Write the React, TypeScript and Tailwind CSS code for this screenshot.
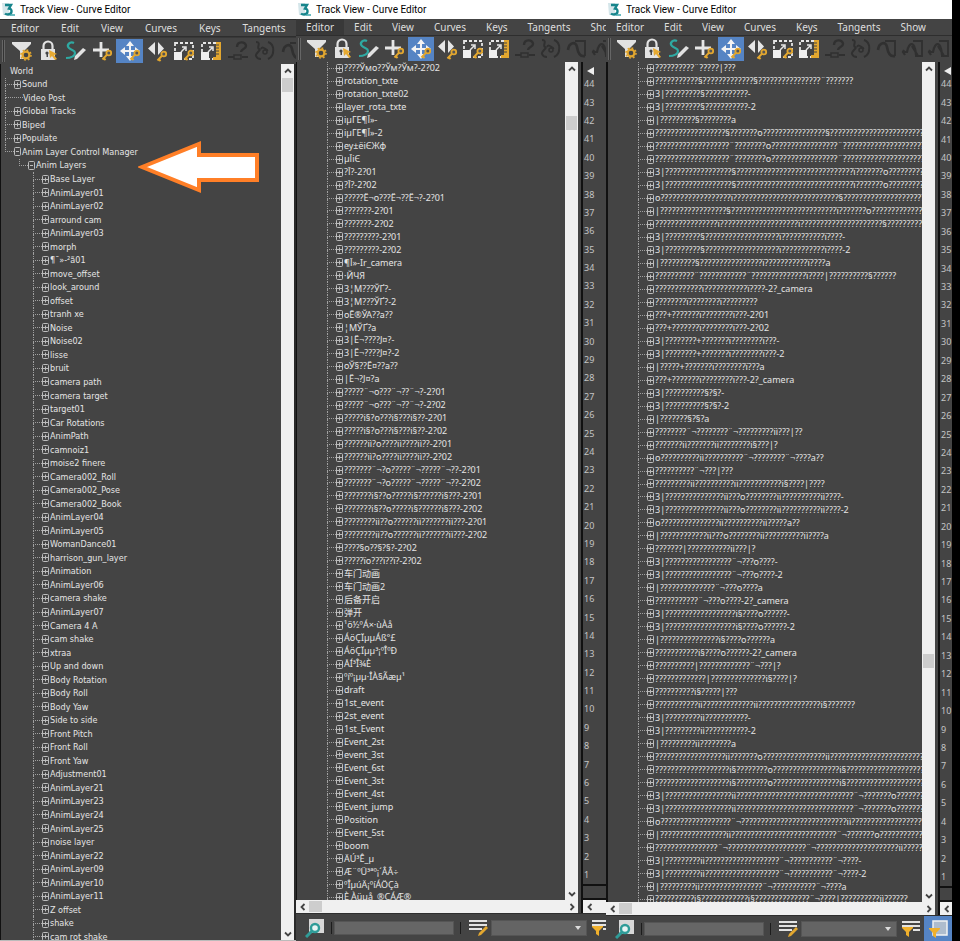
import type { ReactNode } from "react";
import clsx from "clsx";

type TreeNode = {
    name: string;
    level: 0 | 1 | 2 | 3;
    kind?: "plus" | "minus" | "leaf";
    last?: boolean;
};

const layerNames = [
    "Base Layer", "AnimLayer01", "AnimLayer02", "arround cam", "AnimLayer03", "morph", "¶¯»-²ã01", "move_offset",
    "look_around", "offset", "tranh xe", "Noise", "Noise02", "lisse", "bruit", "camera path", "camera target",
    "target01", "Car Rotations", "AnimPath", "camnoiz1", "moise2 finere", "Camera002_Roll", "Camera002_Pose",
    "Camera002_Book", "AnimLayer04", "AnimLayer05", "WomanDance01", "harrison_gun_layer", "Animation",
    "AnimLayer06", "camera shake", "AnimLayer07", "Camera 4 A", "cam shake", "xtraa", "Up and down",
    "Body Rotation", "Body Roll", "Body Yaw", "Side to side", "Front Pitch", "Front Roll", "Front Yaw",
    "Adjustment01", "AnimLayer21", "AnimLayer23", "AnimLayer24", "AnimLayer25", "noise layer", "AnimLayer22",
    "AnimLayer09", "AnimLayer10", "AnimLayer11", "Z offset", "shake", "cam rot shake",
];

const worldTree: TreeNode[] = [
    { name: "World", level: 0, kind: "leaf" },
    { name: "Sound", level: 1 },
    { name: "Video Post", level: 1, kind: "leaf" },
    { name: "Global Tracks", level: 1 },
    { name: "Biped", level: 1 },
    { name: "Populate", level: 1 },
    { name: "Anim Layer Control Manager", level: 1, kind: "minus", last: true },
    { name: "Anim Layers", level: 2, kind: "minus", last: true },
    ...layerNames.map((name): TreeNode => ({ name, level: 3 })),
];

const middleNames = [
    "????Ўмо??Ўм?Ўм?-2?02", "rotation_txte", "rotation_txte02", "layer_rota_txte", "іµГЕ¶Ї»-", "іµГЕ¶Ї»-2",
    "еу±ёіЄЖф", "µЇіЄ", "?Ї?-2?01", "?Ї?-2?02", "?????Ё¬о???Ё¬??Ё¬?-2?01", "???????-2?01", "???????-2?02",
    "?????????-2?01", "?????????-2?02", "¶Ї»-Ir_camera", "·ЙЧЯ", "3¦М???ЎҐ?-", "3¦М???ЎҐ?-2", "оЁ®ЎА??а??",
    "¦МЎҐ?а", "3|Ё¬????Ј¤?-", "3|Ё¬????Ј¤?-2", "оЎ§??Ё¤??а??", "|Ё¬?Ј¤?а", "?????¨¬o???¨¬??¨¬?-2?01",
    "?????¨¬o???¨¬??¨¬?-2?02", "?????i§?o???i§???i§??-2?01", "?????i§?o???i§???i§??-2?02",
    "??????iì?o????iì????iì??-2?01", "??????iì?o????iì????iì??-2?02", "???????¨¬?o?????¨¬?????¨¬??-2?01",
    "???????¨¬?o?????¨¬?????¨¬??-2?02", "???????i§??o?????i§??????i§???-2?01",
    "???????i§??o?????i§??????i§???-2?02", "????????iì??o??????iì???????iì???-2?01",
    "????????iì??o??????iì???????iì???-2?02", "????§o??§?§?-2?02", "?????ïo???ï??ï?-2?02", "车门动画",
    "车门动画2", "后备开启", "弹开", "¹ö½ºÁ×·ùÀå", "ÁöÇÏµµÁß°£", "ÁöÇÏµµ³¡ºÎºÐ", "ÅÍ³Î¾È", "ºíº¡µµ·ÎÀ§Ãæµ¹",
    "draft", "1st_event", "2st_event", "1st_Event", "Event_2st", "event_3st", "Event_6st", "Event_3st",
    "Event_4st", "Event_jump", "Position", "Event_5st", "boom", "ÄÚ³Ê_µ", "Æ¨ºÜ³ªº¡´ÂÂ÷", "ºÎµúÄ¡ºíÁÖÇà",
    "È¸Àüµå_®ÇÁÆ®",
];

// {n} stands for a run of n question marks
const rightPatterns = [
    "{10}¨{5}|{3}", "{11}§{13}§{16}¨{7}", "3|{9}§{11}-", "3|{9}§{11}-2", "|{9}§{8}a", "{18}§{7}o{16}§{26}",
    "{19}¨{8}o{17}¨{26}", "{19}¨{8}o{17}¨{26}", "3|{17}§{30}ï{7}o{16}", "3|{17}§{30}ï{7}o{16}", "o{18}ï{27}§{26}",
    "|{17}§{27}ï{7}o{20}", "{16}ï{20}ï{21}§{14}", "3|{9}§{19}ï{11}ï{4}-", "3|{9}§{19}ï{11}ï{4}-2",
    "|{9}§{16}ï{11}ï{4}a", "{10}¨{12}¨{14}ï{4}|{10}§{6}", "{12}ï{11}ï{4}-2?_camera", "{8}ï{8}ï{9}",
    "???+{7}ï{8}ï???-2?01", "???+{7}ï{8}ï???-2?02", "3|{8}+{7}ï{8}ï???-", "3|{8}+{7}ï{8}ï???-2",
    "|{5}+{7}ï{8}ï???a", "???+{7}ï{8}ï???-2?_camera", "3|{10}§?§?-", "3|{10}§?§?-2", "|{7}§?§?a",
    "{8}¨¬{8}¨¬{9}iì???|??", "{7}iì{7}iì{8}i§???|?", "o{10}iì{10}¨¬{8}¨¬????a??", "{10}¨¬???|???",
    "{9}iì{10}iì{11}i§????|????", "3|{15}iì???o{8}iì{10}iì????-", "3|{15}iì???o{8}iì{10}iì????-2",
    "o{15}iì{10}iì?????a??", "|{12}iì???o{8}iì{10}iì????a", "{7}|{11}iì???|?", "3|{17}¨¬???o????-",
    "3|{17}¨¬???o????-2", "|{14}¨¬???o????a", "{11}¨¬???o????-2?_camera", "3|{18}i§????o??????-",
    "3|{18}i§????o??????-2", "|{15}i§????o??????a", "{11}i§????o??????-2?_camera", "{10}|{13}¨¬???|?",
    "{13}|{14}i§????|?", "{10}i§?????|???", "{11}iì{13}iì{16}i§{7}", "3|{9}iì{11}-", "3|{9}iì{11}-2",
    "|{9}iì{8}a", "{18}iì{7}o{16}iì{26}", "{19}i§{8}o{17}i§{24}", "{19}i§{8}o{17}i§{24}",
    "3|{17}iì{30}¨¬{7}o{14}", "3|{17}iì{30}¨¬{7}o{14}", "o{18}¨¬{27}iì{24}", "|{17}iì{27}¨¬{7}o{18}",
    "{16}¨¬{20}¨¬{21}iì{10}", "3|{9}iì{19}¨¬{11}¨¬????-", "3|{9}iì{19}¨¬{11}¨¬????-2",
    "|{9}iì{16}¨¬{11}¨¬????a", "{10}i§{12}i§{14}¨¬????|{10}iì??????",
];

const expand = (pattern: string) => pattern.replace(/\{(\d+)\}/g, (_, n) => "?".repeat(Number(n)));

const toNodes = (names: string[]) => names.map((name): TreeNode => ({ name, level: 1 }));
const middleTree = toNodes(middleNames);
const rightTree = toNodes(rightPatterns.map(expand));

const menuItems = ["Editor", "Edit", "View", "Curves", "Keys", "Tangents", "Show"];
const frames = Array.from({ length: 44 }, (_, i) => 44 - i);

const Key = ({ x = 10, y = 12 }: { x?: number; y?: number }) => (
    <g transform={`translate(${x} ${y})`}>
        <path d="M1.5 9.5 6 4.6M2.6 8.2l2 1.8" stroke="#e3a72f" strokeWidth="2" fill="none" />
        <circle cx="7.8" cy="3" r="2.4" stroke="#e3a72f" strokeWidth="1.8" fill="#555" />
    </g>
);

const Svg = ({ children }: { children: ReactNode }) => (
    <svg viewBox="0 0 24 24" className="size-6 shrink-0" fill="none" aria-hidden="true">
        {children}
    </svg>
);

const FilterIcon = () => (
    <Svg>
        <path d="M2 3h19v2l-7 7v8h-4v-8L2 5z" fill="#e2e2e2" />
        <circle cx="16" cy="16" r="3.4" stroke="#e3a72f" strokeWidth="2.2" fill="#444" />
        <circle cx="16" cy="16" r="5" stroke="#e3a72f" strokeWidth="1.6" strokeDasharray="1.9 2" />
    </Svg>
);

const LockIcon = () => (
    <Svg>
        <path d="M6.500 11V7a4.500 4.500 0 0 1 9 0v4" stroke="#e2e2e2" strokeWidth="2.2" />
        <path d="M4 10h14v11H4z" fill="#e2e2e2" />
        <circle cx="10" cy="14" r="1.6" fill="#444" />
        <path d="M9.500 14h1.500v4H9.500z" fill="#444" />
        <path d="m12 11 8 4-3 1 3 4-2 1-3-4-2 2z" fill="#e8ab32" />
    </Svg>
);

const DrawCurveIcon = () => (
    <Svg>
        <path d="M10 4C6 2 2 6 5 9s6 2 6 5-4 5-9 5" stroke="#2fa9a2" strokeWidth="2.2" />
        <path d="m10 21 1-4 8-8 3 2-9 9z" fill="#e2e2e2" />
    </Svg>
);

const AddKeyIcon = () => (
    <Svg>
        <path d="M10 3v15M2 11h16" stroke="#e6e6e6" strokeWidth="2.8" />
        <Key x={10} y={11} />
    </Svg>
);

const MoveKeyIcon = () => (
    <Svg>
        <path d="M12 6v13M5 12h14" stroke="#f4f4f4" strokeWidth="2" />
        <path d="m12 2 4 5H8zM12 22l-4-5h8zM2 12l5-4v8zM22 12l-5-4v8z" fill="#f4f4f4" />
        <Key x={11} y={11} />
    </Svg>
);

const SlideKeyIcon = () => (
    <Svg>
        <path d="M10 3v13L3 9.500z" fill="#e6e6e6" />
        <path d="m13 3 6 6.500-6 6.500z" fill="#e6e6e6" />
        <Key x={11} y={12} />
    </Svg>
);

const RegionKeyIcon = () => (
    <Svg>
        <path d="M3 4h18v16H3z" stroke="#e6e6e6" strokeWidth="1.8" strokeDasharray="3 2" />
        <path d="M2 13h8v8H2z" fill="#f0f0f0" />
        <path d="m9 13 4-4M10 8h4v4" stroke="#e6e6e6" strokeWidth="1.500" />
        <Key x={11} y={11} />
    </Svg>
);

const ScaleIcon = () => (
    <Svg>
        <path d="M17 4H3v16h14" stroke="#e6e6e6" strokeWidth="1.8" strokeDasharray="3 2" />
        <path d="M2 13h8v8H2z" fill="#f0f0f0" />
        <path d="m9 13 4-4M10 8h4v4" stroke="#e6e6e6" strokeWidth="1.500" />
        <path d="M17 3h5v18h-8v-3h3z" fill="#e3a72f" />
        <path d="M17 6h3M17 9h3M17 12h3M17 15h3" stroke="#444" strokeWidth="1" />
    </Svg>
);

const SnapIcon = () => (
    <Svg>
        <path d="M11 8c0-6 9-6 9-1 0 3-5 3-5 6" stroke="#303030" strokeWidth="2.4" />
        <path d="M2 18h6M16 18h6" stroke="#303030" strokeWidth="2" />
        <rect x="8" y="16" width="7" height="4" stroke="#303030" strokeWidth="1.500" />
    </Svg>
);

const LoopCurveIcon = () => (
    <Svg>
        <path d="M3 3c6 0 0 6 3 7s-4 4-3 7 3 3 5 3" stroke="#303030" strokeWidth="2" />
        <path d="M8 10c2-4 5 2 7 1M15 3c7 2 7 14 0 17" stroke="#303030" strokeWidth="2" />
        <circle cx="12" cy="13" r="2" stroke="#303030" strokeWidth="1.500" />
    </Svg>
);

const OutOfRangeIcon = () => (
    <Svg>
        <path d="M10 4h10v15" stroke="#303030" strokeWidth="1.800" />
        <path d="M3 13c1-8 8-9 9-3s3 10 8 9" stroke="#303030" strokeWidth="2.600" />
    </Svg>
);

const EaseCurveIcon = () => (
    <Svg>
        <path d="M12 4h9v15h-7" stroke="#303030" strokeWidth="1.800" />
        <path d="M6 15c2-11 8-11 9 3M2 15h5M3 13l-1 2 2 3M11 9l6 10" stroke="#303030" strokeWidth="2.200" />
    </Svg>
);

const tools = [
    { label: "Filters", icon: <FilterIcon /> },
    { label: "Lock selection", icon: <LockIcon /> },
    { label: "Draw curves", icon: <DrawCurveIcon /> },
    { label: "Add keys", icon: <AddKeyIcon /> },
    { label: "Move keys", icon: <MoveKeyIcon />, active: true },
    { label: "Slide keys", icon: <SlideKeyIcon /> },
    { label: "Region keys", icon: <RegionKeyIcon /> },
    { label: "Scale values", icon: <ScaleIcon /> },
    { label: "Snap frames", icon: <SnapIcon /> },
    { label: "Parameter curves", icon: <LoopCurveIcon /> },
    { label: "Out-of-range types", icon: <OutOfRangeIcon /> },
    { label: "Ease curve", icon: <EaseCurveIcon /> },
    { label: "Multiplier curve", icon: <EaseCurveIcon /> },
];

const TitleBar = () => (
    <header className="flex h-[19px] shrink-0 items-center gap-1 bg-white pl-[2px] text-black">
        <svg viewBox="0 0 14 14" className="size-[14px] shrink-0" aria-hidden="true">
            <path d="M0 0h7v12H1z" fill="#d5e6ea" />
            <path d="M3 2h6L7 5.500c4 .5 3 6-1 6-2 0-3-1-3-1" fill="none" stroke="#17858c" strokeWidth="2.400" />
            <path d="M8 12h5" stroke="#3aa6ad" strokeWidth="1.500" />
        </svg>
        <h1 className="font-[Roboto,sans-serif] text-[10px] whitespace-nowrap">Track View - Curve Editor</h1>
    </header>
);

const MenuBar = ({ wide, hover }: { wide?: boolean; hover?: boolean }) => (
    <nav className="flex h-[17px] shrink-0 overflow-hidden border-b border-[#2e2e2e] bg-[#444] text-[10px] leading-4 text-[#dedede]">
        {menuItems.map((item, i) => (
            <button
                key={item}
                type="button"
                className={clsx("shrink-0", wide ? "px-[11px]" : "px-[10px]", hover && i === 0 && "bg-[#383838]")}
            >
                {item}
            </button>
        ))}
    </nav>
);

const ToolBar = ({ wide }: { wide?: boolean }) => (
    <div className="flex h-[26px] shrink-0 items-center overflow-hidden bg-[#444] pl-[2px]">
        <span className="mr-[3px] h-[22px] w-[3px] shrink-0 border-x border-[#666] bg-[#333]" />
        {tools.map(({ label, icon, active }) => (
            <button
                key={label}
                type="button"
                aria-label={label}
                className={clsx(
                    "flex h-6 shrink-0 items-center justify-center overflow-hidden",
                    wide ? "w-[27px]" : "w-[26px]",
                    active && "bg-[#5584c4]",
                )}
            >
                {icon}
            </button>
        ))}
    </div>
);

const Expander = ({ open }: { open?: boolean }) => (
    <button type="button" aria-label={open ? "Collapse" : "Expand"} className="mr-px shrink-0">
        <svg viewBox="0 0 7 9" className="h-[9px] w-[7px]" fill="none" stroke="#bdbdbd" aria-hidden="true">
            <rect x=".5" y=".5" width="6" height="8" rx="1" />
            <path d={open ? "M2 4.500h3" : "M1 4.500h5M3.500 2.500v4"} />
        </svg>
    </button>
);

const indents = ["pl-[9px]", "pl-1", "pl-[18px]", "pl-8"];

const TreeRow = ({ node }: { node: TreeNode }) => (
    <li className={clsx("flex min-h-0 flex-1 items-center whitespace-nowrap", indents[node.level])}>
        {node.level > 0 && (
            <span className={clsx("flex shrink-0 flex-col self-stretch", node.kind === "leaf" ? "w-[18px]" : "w-[9px]")}>
                <span className="flex-1 border-b border-l border-dotted border-[#a0a0a0]" />
                <span className={clsx("flex-1 border-dotted border-[#a0a0a0]", !node.last && "border-l")} />
            </span>
        )}
        {node.kind !== "leaf" && <Expander open={node.kind === "minus"} />}
        <span className="leading-3">{node.name}</span>
    </li>
);

const Tree = ({ nodes, label, className }: { nodes: TreeNode[]; label: string; className: string }) => (
    <div className={clsx("grid min-w-0 flex-1 overflow-hidden border-[#111] bg-[#444]", className)}>
        <ul aria-label={label} className="-mb-1 flex min-h-0 flex-col text-[9px] text-[#e4e4e4]">
            {nodes.map((node, i) => (
                <TreeRow key={i} node={node} />
            ))}
        </ul>
    </div>
);

const chevrons = {
    up: "M2 6.500 5 3.500 8 6.500",
    down: "M2 3.500 5 6.500 8 3.500",
    left: "M6.500 2 3.500 5 6.500 8",
    right: "M3.500 2 6.500 5 3.500 8",
};

const ScrollButton = ({ dir }: { dir: keyof typeof chevrons }) => (
    <button type="button" aria-label={`Scroll ${dir}`} className="flex size-[13px] shrink-0 items-center justify-center">
        <svg viewBox="0 0 10 10" className="size-[10px]" fill="none" stroke="#444" strokeWidth="1.800" aria-hidden="true">
            <path d={chevrons[dir]} />
        </svg>
    </button>
);

// before and after are the weights of the free track on each side of the thumb
const VerticalScroll = ({ before, after }: { before: number; after: number }) => (
    <div className="flex w-[13px] shrink-0 flex-col bg-[#f0f0f0]">
        <ScrollButton dir="up" />
        <span style={{ flexGrow: before }} />
        <span className="mx-px h-[14px] shrink-0 bg-[#cdcdcd]" />
        <span style={{ flexGrow: after }} />
        <ScrollButton dir="down" />
    </div>
);

const HorizontalScroll = () => (
    <div className="flex h-[13px] min-w-0 flex-1 bg-[#f0f0f0]">
        <ScrollButton dir="left" />
        <span className="my-px w-[13px] bg-[#cdcdcd]" />
        <span className="flex-1" />
        <ScrollButton dir="right" />
    </div>
);

const FrameRuler = ({ className }: { className: string }) => (
    <div className={clsx("ml-[3px] flex shrink-0 flex-col overflow-hidden border-l-2 border-[#111] bg-[#444] text-[9px] text-[#c4c4c4]", className)}>
        <svg viewBox="0 0 8 8" className="mt-[5px] ml-1 size-2 shrink-0" aria-hidden="true">
            <path d="M7 0v8L0 4z" fill="#eee" />
        </svg>
        <ol className="flex min-h-0 flex-1 flex-col">
            {frames.map((frame) => (
                <li key={frame} className="flex min-h-0 flex-1 items-center pl-px leading-3">
                    {frame}
                </li>
            ))}
        </ol>
        <span className="h-4 shrink-0 border-y-2 border-[#111]" />
    </div>
);

const PickIcon = () => (
    <svg viewBox="0 0 20 20" className="size-5 shrink-0" fill="none" aria-hidden="true">
        <path d="M4 1h15v14H4z" fill="#d8d8d8" />
        <circle cx="10" cy="10" r="4" fill="#e8f4f3" stroke="#2f9c98" strokeWidth="2.400" />
        <path d="m7 13-6 6" stroke="#2f9c98" strokeWidth="3" />
    </svg>
);

const EditListIcon = () => (
    <svg viewBox="0 0 20 20" className="size-5 shrink-0" aria-hidden="true">
        <path d="M1 2h18v2H1zM1 6h18v2H1zM1 10h13v2H1z" fill="#e2e2e2" />
        <path d="m10 18 1-3 7-7 2 2-7 7z" fill="#e3a72f" />
    </svg>
);

const FilterListIcon = () => (
    <svg viewBox="0 0 20 20" className="size-5 shrink-0" aria-hidden="true">
        <path d="M1 2h18v2H1zM1 6h18v2H1zM12 10h7v2h-7z" fill="#e2e2e2" />
        <path d="M1 8h11v1L8 13v5l-3-2v-3L1 9z" fill="#f0b02c" />
    </svg>
);

const FilterSelectedIcon = () => (
    <svg viewBox="0 0 20 20" className="size-5 shrink-0" aria-hidden="true">
        <path d="M5 2h14v14H5z" fill="#aebccd" stroke="#f2f2f2" strokeWidth="1.500" />
        <path d="M1 9h11v1L8 14v5l-3-2v-3L1 10z" fill="#f0b02c" />
    </svg>
);

const StatusBar = ({ withSelected }: { withSelected?: boolean }) => (
    <footer
        className={clsx(
            "flex shrink-0 items-center overflow-hidden border-t border-[#2e2e2e] bg-[#444] pl-[9px]",
            withSelected ? "h-[26px]" : "h-7",
        )}
    >
        <button type="button" aria-label="Zoom selected object" className="shrink-0">
            <PickIcon />
        </button>
        <span className="mr-[2px] ml-[6px] h-3 w-px shrink-0 bg-[#1c1c1c]" />
        <input
            type="text"
            aria-label="Object name"
            className="h-[14px] w-[120px] shrink-0 border border-[#555] bg-[#666] px-1 text-[9px] text-white"
        />
        <span className="mr-[7px] ml-[6px] h-3 w-px shrink-0 bg-[#1c1c1c]" />
        <button type="button" aria-label="Edit track set" className="mr-[3px] shrink-0">
            <EditListIcon />
        </button>
        <span className="relative mr-1 w-24 shrink-0">
            <select aria-label="Track set" className="block h-4 w-full appearance-none border border-[#555] bg-[#646464] text-[9px]">
                <option value=""></option>
            </select>
            <svg viewBox="0 0 6 4" className="pointer-events-none absolute top-[6px] right-[6px] h-1 w-[6px]" aria-hidden="true">
                <path d="M0 0h6L3 4z" fill="#ddd" />
            </svg>
        </span>
        <button type="button" aria-label="Filter selected tracks" className="shrink-0">
            <FilterListIcon />
        </button>
        {withSelected && (
            <button type="button" aria-label="Filter selected objects" className="ml-[3px] flex h-full shrink-0 grow items-center justify-center bg-[#5584c4]">
                <FilterSelectedIcon />
            </button>
        )}
    </footer>
);

const ArrowCallout = () => (
    <svg viewBox="0 0 122 54" className="absolute top-[140px] left-[138px] h-[54px] w-[122px]" aria-hidden="true">
        <path d="M4 27 61 4v11h58v25H61v10z" fill="#fff" stroke="#ff7f27" strokeWidth="4" />
    </svg>
);

const WorldEditor = () => (
    <section className="relative flex min-h-0 min-w-0 flex-col border-b border-[#bbb]">
        <TitleBar />
        <div className="h-px shrink-0 bg-[#2e2e2e]" />
        <MenuBar wide />
        <div className="h-px shrink-0 bg-[#383838]" />
        <ToolBar wide />
        <div className="flex min-h-0 flex-1">
            <Tree
                nodes={worldTree}
                label="World"
                className="border-l font-['DejaVu_Sans_Condensed','Noto_Sans',sans-serif]"
            />
            <VerticalScroll before={1} after={840} />
            <span className="w-[2px] shrink-0 bg-[#2a2a2a]" />
        </div>
        <ArrowCallout />
    </section>
);

type LayerEditorProps = {
    nodes: TreeNode[];
    before: number;
    after: number;
    treeClass: string;
    rulerWidth: string;
    hover?: boolean;
    withSelected?: boolean;
};

const LayerEditor = ({ nodes, before, after, treeClass, rulerWidth, hover, withSelected }: LayerEditorProps) => (
    <section className="flex min-h-0 min-w-0 flex-col bg-[#444]">
        <TitleBar />
        <MenuBar hover={hover} />
        <ToolBar />
        <div className="flex min-h-0 flex-1">
            <Tree nodes={nodes} label="Anim Layers" className={treeClass} />
            <VerticalScroll before={before} after={after} />
            <FrameRuler className={rulerWidth} />
        </div>
        <div className="flex shrink-0">
            <HorizontalScroll />
            <div className={clsx("ml-[3px] shrink-0 overflow-hidden border-l-2 border-[#111] bg-[#f0f0f0]", rulerWidth)}>
                <ScrollButton dir="left" />
            </div>
        </div>
        <StatusBar withSelected={withSelected} />
    </section>
);

export default function App() {
    return (
        <main className="grid h-screen grid-cols-[296fr_310fr_346fr_8px] grid-rows-[minmax(0,1fr)] overflow-hidden bg-black font-['Noto_Sans','Noto_Sans_CJK_SC',sans-serif]">
            <WorldEditor />
            <LayerEditor
                nodes={middleTree}
                before={41}
                after={758}
                treeClass="border-l pl-[26px]"
                rulerWidth="w-[25px]"
                hover
            />
            <LayerEditor
                nodes={rightTree}
                before={579}
                after={221}
                treeClass="border-l-2 pl-[26px]"
                rulerWidth="w-[14px]"
                withSelected
            />
        </main>
    );
}
